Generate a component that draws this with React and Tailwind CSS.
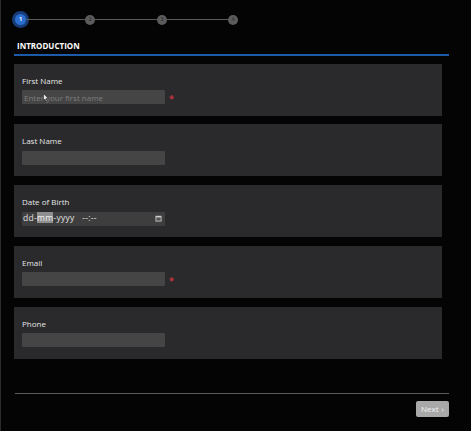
import React from "react";

function Step({ n, active }) {
  return (
    <div
      className={
        active
          ? "w-[11px] h-[11px] rounded-full bg-[#2a6fd0] shadow-[0_0_0_3px_#173d78] flex items-center justify-center text-[5.5px] leading-none text-white font-bold shrink-0"
          : "w-[10px] h-[10px] rounded-full bg-[#5c5c5c] flex items-center justify-center text-[5.5px] leading-none text-[#383838] font-bold shrink-0"
      }
    >
      {n}
    </div>
  );
}

function Line({ w }) {
  return <div className={`h-px bg-[#5a5a5a] ${w}`} />;
}

function Card({ label, children }) {
  return (
    <div className="h-[52px] bg-[#2a2a2c] pt-[12px] px-[8px] flex flex-col">
      <div className="text-[8px] leading-[10px] text-[#e6e6e6] h-[10px]">{label}</div>
      <div className="mt-[4.5px] flex items-center">{children}</div>
    </div>
  );
}

function Req() {
  return <span className="ml-[4px] text-[9px] leading-none text-[#c2343c] font-bold mt-[3px]">*</span>;
}

function TextInput({ placeholder }) {
  return (
    <input
      placeholder={placeholder}
      className="block w-[143px] h-[14px] bg-[#454545] px-[2px] text-[8px] text-[#ddd] placeholder:text-[#7e7e7e] outline-none border-0 rounded-[1px] font-['Open_Sans',sans-serif]"
    />
  );
}

export default function App() {
  return (
    <div className="w-full h-[436px] bg-white font-['Open_Sans',sans-serif]">
      <div className="w-[471px] h-[431px] bg-[#040405] border-l border-[#2b2b2b] pl-[13px] pr-[22px] pt-[14px] flex flex-col">
        <div className="flex items-center pl-[1px]">
          <Step n="1" active />
          <Line w="w-[59px]" />
          <Step n="2" />
          <Line w="w-[62px]" />
          <Step n="3" />
          <Line w="w-[61px]" />
          <Step n="4" />
        </div>
        <div className="mt-[16px] text-[8px] leading-[10px] font-bold text-white pl-[3px] pb-[3px] border-b-2 border-[#1d5aa8]">
          INTRODUCTION
        </div>
        <div className="mt-[7.5px] mr-[7px] flex flex-col gap-[8.75px]">
          <Card label="First Name">
            <div className="relative flex">
              <TextInput placeholder="Enter your first name" />
              <svg className="absolute left-[21px] top-[3px]" width="6" height="9" viewBox="0 0 6 9">
                <path d="M0.5 0.5 L0.5 7.5 L2 6 L3.2 8.5 L4.2 8 L3 5.6 L5.2 5.6 Z" fill="#eee" stroke="#222" strokeWidth="0.6" />
              </svg>
            </div>
            <Req />
          </Card>
          <Card label="Last Name">
            <TextInput placeholder="" />
          </Card>
          <Card label="Date of Birth">
            <div className="w-[143px] h-[14px] bg-[#3e3e3e] px-[1px] flex items-center justify-between rounded-[1px]">
              <span className="text-[8.5px] leading-none text-[#e0e0e0] whitespace-pre tracking-[0.3px]">
                dd-<span className="bg-[#8f8f8f] text-[#f4f4f4]">mm</span>-yyyy   --:--
              </span>
              <svg width="7" height="7" viewBox="0 0 7 7" className="mr-[2px]">
                <rect x="0.5" y="0.8" width="6" height="5.7" fill="#cfcfcf" />
                <rect x="1.3" y="2.4" width="4.4" height="3.3" fill="#555" />
              </svg>
            </div>
          </Card>
          <Card label="Email">
            <TextInput placeholder="" />
            <Req />
          </Card>
          <Card label="Phone">
            <TextInput placeholder="" />
          </Card>
        </div>
        <div className="mt-[34px] ml-[1px] h-px bg-[#5a5a5a]" />
        <div className="mt-[7.5px] flex justify-end">
          <button className="w-[33px] h-[16px] bg-[#a9a9a9] rounded-[2px] text-[8px] leading-none text-[#f4f4f4] flex items-center justify-center gap-[3px] font-['Open_Sans',sans-serif]">
            <span>Next</span>
            <span className="text-[8px]">›</span>
          </button>
        </div>
      </div>
    </div>
  );
}
